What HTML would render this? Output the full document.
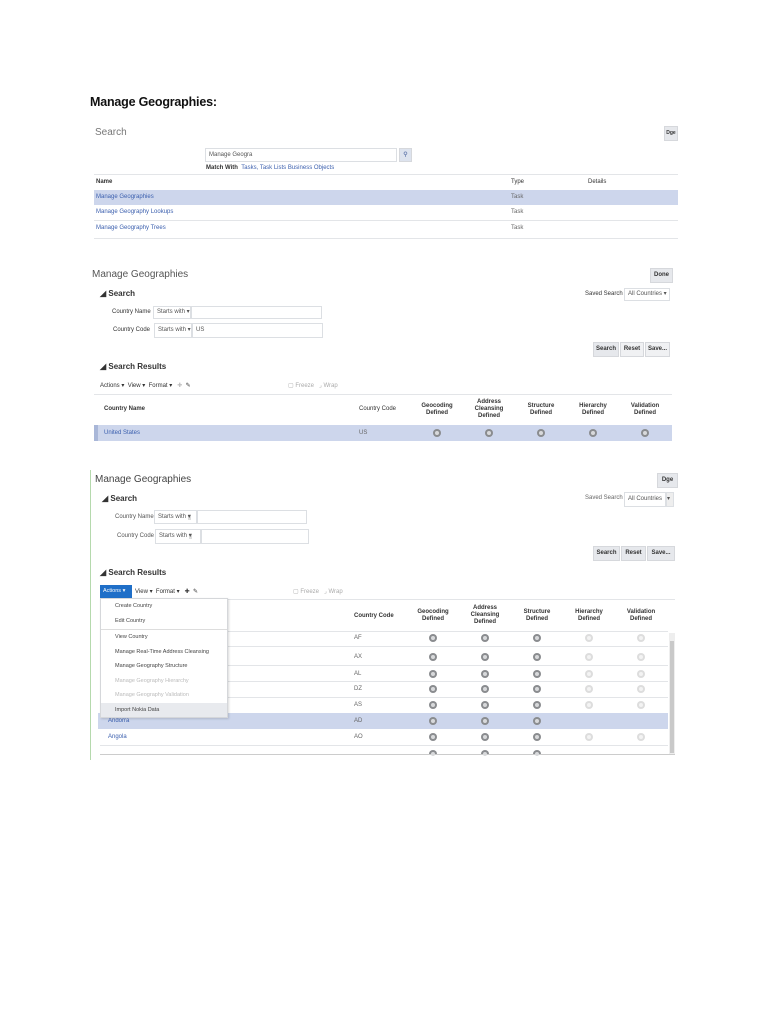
<!DOCTYPE html>
<html><head><meta charset="utf-8"><style>
body{margin:0;width:768px;height:1024px;background:#fff;position:relative;font-family:"Liberation Sans",sans-serif;overflow:hidden}
.a{position:absolute;white-space:nowrap}
.s{font-size:6px;color:#333}
.l{color:#3b5fae}
.btn{position:absolute;background:#e6e8ec;border:1px solid #d6d8dc;font-size:6px;color:#333;text-align:center;box-sizing:border-box;font-weight:bold}
.inp{position:absolute;border:1px solid #dcdfe3;background:#fff;box-sizing:border-box;font-size:6px;color:#555;padding-left:3px}
.hl{position:absolute;background:#cdd6ec}
.ln{position:absolute;height:1px;background:#e3e5e8}
.ck{position:absolute;width:8px;height:8px;border-radius:50%;background:#8a8c8f;margin-left:-4px}
.ck::after{content:"";position:absolute;left:2px;top:2px;width:4px;height:4px;border-radius:50%;background:#d8d9db}
.ck.g{background:#ddd}
.ck.g::after{background:#f3f3f3}
.hd{position:absolute;font-size:6px;color:#333;text-align:center;font-weight:bold;width:50px;margin-left:-25px;line-height:7px}
.mi{position:absolute;font-size:5.5px;color:#444;left:115px}
</style></head><body>
<div class="a" style="left:90px;top:95px;font-size:12.5px;font-weight:bold;color:#111;letter-spacing:-0.2px">Manage Geographies:</div>

<!-- Section 1 -->
<div class="a" style="left:95px;top:127px;font-size:10px;color:#777">Search</div>
<div class="btn" style="left:664px;top:126px;width:14px;height:15px;line-height:13px;font-size:5px">Dge</div>
<div class="inp" style="left:205px;top:148px;width:192px;height:14px;line-height:12px">Manage Geogra</div>
<div class="btn" style="left:399px;top:148px;width:13px;height:14px;background:#dde3ee;color:#6a7fb0;line-height:12px">&#9906;</div>
<div class="a s" style="left:206px;top:165px;font-weight:bold">Match With <span class="l" style="font-weight:normal">&nbsp;Tasks, Task Lists Business Objects</span></div>
<div class="ln" style="left:94px;top:174px;width:584px"></div>
<div class="a s" style="left:96px;top:179px;font-weight:bold">Name</div>
<div class="a s" style="left:511px;top:179px">Type</div>
<div class="a s" style="left:588px;top:179px">Details</div>
<div class="hl" style="left:94px;top:190px;width:584px;height:15px"></div>
<div class="a s l" style="left:96px;top:194px">Manage Geographies</div>
<div class="a s" style="left:511px;top:194px;color:#666">Task</div>
<div class="ln" style="left:94px;top:220px;width:584px"></div>
<div class="a s l" style="left:96px;top:209px">Manage Geography Lookups</div>
<div class="a s" style="left:511px;top:209px;color:#666">Task</div>
<div class="a s l" style="left:96px;top:225px">Manage Geography Trees</div>
<div class="a s" style="left:511px;top:225px;color:#666">Task</div>
<div class="ln" style="left:94px;top:238px;width:584px"></div>

<!-- Section 2 -->
<div class="a" style="left:92px;top:269px;font-size:10px;color:#555">Manage Geographies</div>
<div class="btn" style="left:650px;top:268px;width:23px;height:15px;line-height:13px">Done</div>
<div class="a" style="left:100px;top:289px;font-size:8px;font-weight:bold;color:#333">◢ Search</div>
<div class="a s" style="left:585px;top:291px">Saved Search</div>
<div class="inp" style="left:624px;top:288px;width:46px;height:13px;line-height:11px">All Countries ▾</div>
<div class="a s" style="left:112px;top:309px">Country Name</div>
<div class="inp" style="left:153px;top:306px;width:38px;height:13px;line-height:11px">Starts with ▾</div>
<div class="inp" style="left:191px;top:306px;width:131px;height:13px"></div>
<div class="a s" style="left:113px;top:327px">Country Code</div>
<div class="inp" style="left:154px;top:323px;width:38px;height:15px;line-height:13px">Starts with ▾</div>
<div class="inp" style="left:192px;top:323px;width:131px;height:15px;line-height:13px">US</div>
<div class="btn" style="left:593px;top:342px;width:26px;height:15px;line-height:13px">Search</div>
<div class="btn" style="left:620px;top:342px;width:24px;height:15px;line-height:13px;background:#f0f1f3">Reset</div>
<div class="btn" style="left:645px;top:342px;width:25px;height:15px;line-height:13px;background:#f0f1f3">Save...</div>
<div class="a" style="left:100px;top:362px;font-size:8px;font-weight:bold;color:#333">◢ Search Results</div>
<div class="a s" style="left:100px;top:382px">Actions ▾ &nbsp;View ▾ &nbsp;Format ▾ &nbsp;&nbsp;<span style="color:#bbb">✚</span> &nbsp;✎</div>
<div class="a s" style="left:288px;top:382px;color:#aaa">▢ Freeze &nbsp;&nbsp;⌟ Wrap</div>
<div class="ln" style="left:94px;top:394px;width:578px"></div>
<div class="a s" style="left:104px;top:406px;font-weight:bold">Country Name</div>
<div class="a s" style="left:359px;top:406px">Country Code</div>
<div class="hd" style="left:437px;top:403px">Geocoding<br>Defined</div>
<div class="hd" style="left:489px;top:399px">Address<br>Cleansing<br>Defined</div>
<div class="hd" style="left:541px;top:403px">Structure<br>Defined</div>
<div class="hd" style="left:593px;top:403px">Hierarchy<br>Defined</div>
<div class="hd" style="left:645px;top:403px">Validation<br>Defined</div>
<div class="hl" style="left:94px;top:425px;width:578px;height:16px"></div>
<div class="a" style="left:94px;top:425px;width:4px;height:16px;background:#a9b7d8"></div>
<div class="a s l" style="left:104px;top:430px">United States</div>
<div class="a s" style="left:359px;top:430px;color:#666">US</div>
<div class="ck" style="left:437px;top:429px"></div><div class="ck" style="left:489px;top:429px"></div><div class="ck" style="left:541px;top:429px"></div><div class="ck" style="left:593px;top:429px"></div><div class="ck" style="left:645px;top:429px"></div>

<!-- Section 3 -->
<div class="a" style="left:90px;top:470px;width:1px;height:290px;background:#b5d9ad"></div>
<div class="a" style="left:95px;top:474px;font-size:10px;color:#444">Manage Geographies</div>
<div class="btn" style="left:657px;top:473px;width:21px;height:15px;line-height:13px">Dge</div>
<div class="a" style="left:102px;top:494px;font-size:8px;font-weight:bold;color:#333">◢ Search</div>
<div class="a s" style="left:585px;top:495px;color:#666">Saved Search</div>
<div class="inp" style="left:624px;top:492px;width:42px;height:15px;line-height:13px">All Countries</div>
<div class="inp" style="left:666px;top:492px;width:8px;height:15px;line-height:13px;padding:0;background:#eee">▾</div>
<div class="a s" style="left:115px;top:514px;color:#555">Country Name</div>
<div class="inp" style="left:154px;top:510px;width:43px;height:14px;line-height:12px">Starts with <span style="background:#ddd">▾</span></div>
<div class="inp" style="left:197px;top:510px;width:110px;height:14px"></div>
<div class="a s" style="left:117px;top:533px;color:#555">Country Code</div>
<div class="inp" style="left:155px;top:529px;width:46px;height:15px;line-height:13px">Starts with <span style="background:#ddd">▾</span></div>
<div class="inp" style="left:201px;top:529px;width:108px;height:15px"></div>
<div class="btn" style="left:593px;top:546px;width:27px;height:15px;line-height:13px">Search</div>
<div class="btn" style="left:621px;top:546px;width:25px;height:15px;line-height:13px">Reset</div>
<div class="btn" style="left:647px;top:546px;width:28px;height:15px;line-height:13px">Save...</div>
<div class="a" style="left:100px;top:568px;font-size:8px;font-weight:bold;color:#333">◢ Search Results</div>
<div class="a" style="left:100px;top:585px;width:32px;height:13px;background:#1f6fc8;color:#fff;font-size:5.5px;line-height:13px;padding-left:3px;box-sizing:border-box">Actions ▾</div>
<div class="a s" style="left:135px;top:588px">View ▾ &nbsp;Format ▾ &nbsp;&nbsp;✚ &nbsp;✎</div>
<div class="a s" style="left:293px;top:588px;color:#aaa">▢ Freeze &nbsp;&nbsp;⌟ Wrap</div>
<div class="ln" style="left:100px;top:599px;width:575px"></div>
<div class="a s" style="left:354px;top:613px;font-weight:bold">Country Code</div>
<div class="hd" style="left:433px;top:609px">Geocoding<br>Defined</div>
<div class="hd" style="left:485px;top:605px">Address<br>Cleansing<br>Defined</div>
<div class="hd" style="left:537px;top:609px">Structure<br>Defined</div>
<div class="hd" style="left:589px;top:609px">Hierarchy<br>Defined</div>
<div class="hd" style="left:641px;top:609px">Validation<br>Defined</div>
<div class="ln" style="left:100px;top:631px;width:568px"></div>
<div class="hl" style="left:98px;top:713px;width:570px;height:16px"></div>
<div class="a s l" style="left:108px;top:718px">Andorra</div>
<div class="a s l" style="left:108px;top:734px">Angola</div>
<div class="a s" style="left:354px;top:635px;color:#666">AF</div>
<div class="a s" style="left:354px;top:654px;color:#666">AX</div>
<div class="a s" style="left:354px;top:671px;color:#666">AL</div>
<div class="a s" style="left:354px;top:686px;color:#666">DZ</div>
<div class="a s" style="left:354px;top:702px;color:#666">AS</div>
<div class="a s" style="left:354px;top:718px;color:#666">AD</div>
<div class="a s" style="left:354px;top:734px;color:#666">AO</div>
<div class="ln" style="left:100px;top:646px;width:568px"></div>
<div class="ln" style="left:100px;top:665px;width:568px"></div>
<div class="ln" style="left:100px;top:681px;width:568px"></div>
<div class="ln" style="left:100px;top:697px;width:568px"></div>
<div class="ln" style="left:100px;top:745px;width:568px"></div>
<div class="a" style="left:100px;top:754px;width:575px;height:1px;background:#ccc"></div>
<div class="a" style="left:669px;top:633px;width:6px;height:121px;background:#eee"></div>
<div class="a" style="left:670px;top:641px;width:4px;height:112px;background:#c9c9c9"></div>
<div class="ck" style="left:433px;top:634px"></div><div class="ck" style="left:485px;top:634px"></div><div class="ck" style="left:537px;top:634px"></div><div class="ck g" style="left:589px;top:634px"></div><div class="ck g" style="left:641px;top:634px"></div>
<div class="ck" style="left:433px;top:653px"></div><div class="ck" style="left:485px;top:653px"></div><div class="ck" style="left:537px;top:653px"></div><div class="ck g" style="left:589px;top:653px"></div><div class="ck g" style="left:641px;top:653px"></div>
<div class="ck" style="left:433px;top:670px"></div><div class="ck" style="left:485px;top:670px"></div><div class="ck" style="left:537px;top:670px"></div><div class="ck g" style="left:589px;top:670px"></div><div class="ck g" style="left:641px;top:670px"></div>
<div class="ck" style="left:433px;top:685px"></div><div class="ck" style="left:485px;top:685px"></div><div class="ck" style="left:537px;top:685px"></div><div class="ck g" style="left:589px;top:685px"></div><div class="ck g" style="left:641px;top:685px"></div>
<div class="ck" style="left:433px;top:701px"></div><div class="ck" style="left:485px;top:701px"></div><div class="ck" style="left:537px;top:701px"></div><div class="ck g" style="left:589px;top:701px"></div><div class="ck g" style="left:641px;top:701px"></div>
<div class="ck" style="left:433px;top:717px"></div><div class="ck" style="left:485px;top:717px"></div><div class="ck" style="left:537px;top:717px"></div>
<div class="ck" style="left:433px;top:733px"></div><div class="ck" style="left:485px;top:733px"></div><div class="ck" style="left:537px;top:733px"></div><div class="ck g" style="left:589px;top:733px"></div><div class="ck g" style="left:641px;top:733px"></div>
<div class="ck" style="left:433px;top:750px;height:4px;border-radius:4px 4px 0 0"></div><div class="ck" style="left:485px;top:750px;height:4px;border-radius:4px 4px 0 0"></div><div class="ck" style="left:537px;top:750px;height:4px;border-radius:4px 4px 0 0"></div>

<!-- menu -->
<div class="a" style="left:100px;top:598px;width:128px;height:120px;background:#fff;border:1px solid #d5d7da;box-shadow:1px 1px 2px rgba(0,0,0,.15);box-sizing:border-box"></div>
<div class="a" style="left:101px;top:629px;width:126px;height:1px;background:#ddd"></div>
<div class="a" style="left:101px;top:703px;width:126px;height:14px;background:#e8eaee"></div>
<div class="mi" style="top:603px">Create Country</div>
<div class="mi" style="top:618px">Edit Country</div>
<div class="mi" style="top:634px">View Country</div>
<div class="mi" style="top:649px">Manage Real-Time Address Cleansing</div>
<div class="mi" style="top:663px">Manage Geography Structure</div>
<div class="mi" style="top:678px;color:#bbb">Manage Geography Hierarchy</div>
<div class="mi" style="top:692px;color:#bbb">Manage Geography Validation</div>
<div class="mi" style="top:707px">Import Nokia Data</div>
</body></html>
